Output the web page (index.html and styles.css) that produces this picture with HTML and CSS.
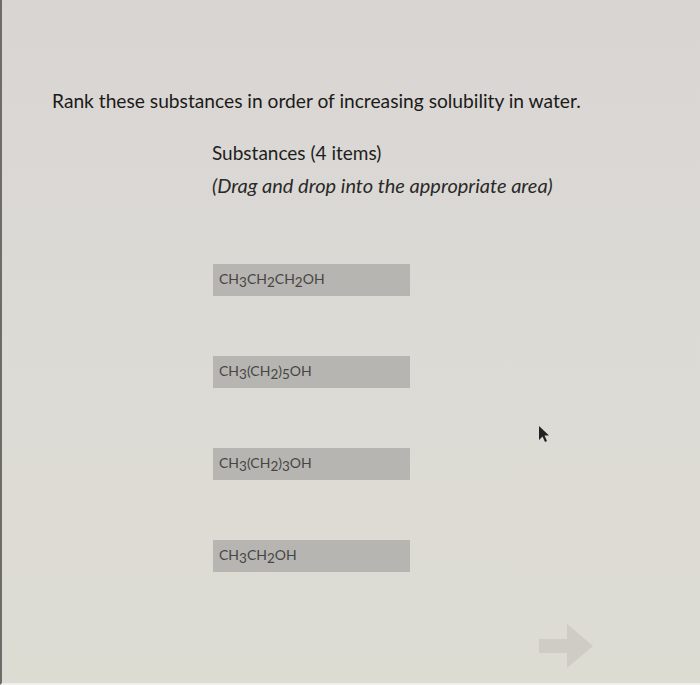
FILE: index.html
```html
<!DOCTYPE html>
<html lang="en">
<head>
<meta charset="utf-8">
<title>Ranking question</title>
<link rel="stylesheet" href="styles.css">
</head>
<body>
<main class="screen">
  <p class="prompt">Rank these substances in order of increasing solubility in water.</p>
  <section class="bank">
    <h2 class="bank-title">Substances (4 items)</h2>
    <p class="bank-hint">(Drag and drop into the appropriate area)</p>
    <ul class="items">
      <li class="item">CH<sub>3</sub>CH<sub>2</sub>CH<sub>2</sub>OH</li>
      <li class="item">CH<sub>3</sub>(CH<sub>2</sub>)<sub>5</sub>OH</li>
      <li class="item">CH<sub>3</sub>(CH<sub>2</sub>)<sub>3</sub>OH</li>
      <li class="item">CH<sub>3</sub>CH<sub>2</sub>OH</li>
    </ul>
  </section>
  <svg class="pointer" width="14" height="18" viewBox="0 0 14 18" aria-hidden="true">
    <path d="M2 1 L2 15 L5.5 11.5 L8 17 L10 16 L7.5 10.5 L12 10.5 Z" fill="#222"/>
  </svg>
  <svg class="next" width="60" height="52" viewBox="0 0 60 52" aria-hidden="true">
    <path d="M2 19 H30 V4 L56 26 L30 48 V33 H2 Z" fill="#cfccc5"/>
  </svg>
</main>
</body>
</html>
```
FILE: styles.css
```css
html, body {
  margin: 0;
  padding: 0;
}

body {
  width: 700px;
  height: 685px;
  overflow: hidden;
  font-family: Lato, "Open Sans", sans-serif;
}

.screen {
  position: relative;
  box-sizing: border-box;
  width: 700px;
  height: 685px;
  padding: 86px 0 0 50px;
  border-left: 2px solid #6e6c68;
  border-bottom: 2px solid #f0efea;
  background: linear-gradient(180deg, #d8d5d3 0%, #dcdad5 45%, #dddcd3 100%);
}

.prompt {
  margin: 0;
  font-size: 19.2px;
  line-height: 30px;
  color: #1b1a19;
}

.bank {
  padding-left: 160px;
  margin-top: 24px;
}

.bank-title {
  margin: 0;
  font-size: 19px;
  font-weight: 400;
  line-height: 26px;
  color: #1f1e1d;
}

.bank-hint {
  margin: 6px 0 0;
  font-size: 20px;
  font-style: italic;
  line-height: 26px;
  color: #2a2928;
}

.items {
  list-style: none;
  margin: 0;
  padding: 66px 0 0 1px;
  display: flex;
  flex-direction: column;
  gap: 60px;
}

.item {
  box-sizing: border-box;
  width: 197px;
  height: 32px;
  padding: 0 0 0 6px;
  background: #b6b5b1;
  color: #464544;
  font-size: 14px;
  line-height: 30px;
  white-space: nowrap;
}

.item sub {
  font-size: 13.5px;
  vertical-align: -3px;
  line-height: 0;
}

.pointer {
  position: absolute;
  left: 535px;
  top: 425px;
}

.next {
  position: absolute;
  left: 535px;
  top: 620px;
}
```
